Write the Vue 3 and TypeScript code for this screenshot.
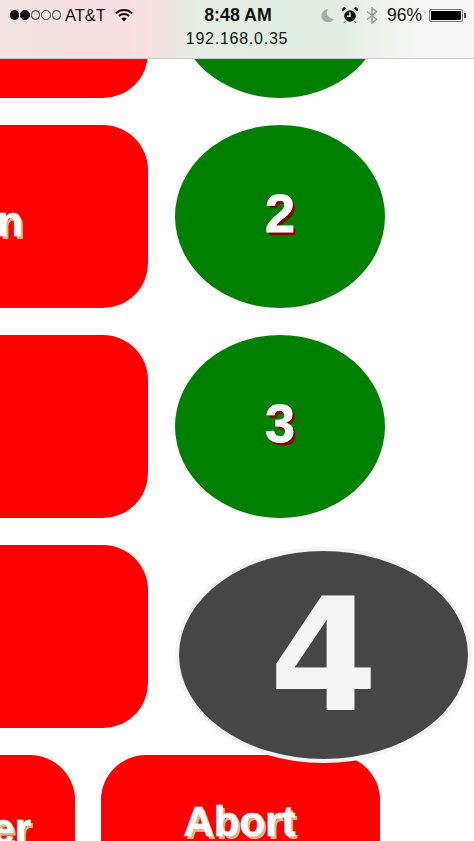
<script setup lang="ts">
const rows = [
  { id: 1, label: '', num: '' },
  { id: 2, label: 'n', num: '2' },
  { id: 3, label: '', num: '3' },
]
</script>

<template>
  <div class="screen">
    <header class="bar">
      <div class="status">
        <div class="left">
          <span class="dots">
            <i class="dot on"></i><i class="dot on"></i><i class="dot"></i><i class="dot"></i><i class="dot"></i>
          </span>
          <span class="carrier">AT&amp;T</span>
          <svg class="wifi" width="18" height="14" viewBox="0 0 18 14">
            <path d="M1 5.2C5.4 .9 12.6 .9 17 5.2" fill="none" stroke="#111" stroke-width="1.9" />
            <path d="M3.9 8C6.8 5.3 11.2 5.3 14.1 8" fill="none" stroke="#111" stroke-width="1.9" />
            <path d="M6.3 10.5L9 13.4 11.7 10.5C10 9.1 8 9.1 6.3 10.5Z" fill="#111" />
          </svg>
        </div>
        <div class="time">8:48 AM</div>
        <div class="right">
          <svg class="moon" width="15" height="15" viewBox="0 0 15 15">
            <path d="M8.6 1C5.6 3.6 5.800 9.500 14 11.200C11.500 15 5.500 15.200 2.600 11.600C-.4 7.600 2.800 1.200 8.600 1Z" fill="#a9aca9" />
          </svg>
          <svg class="alarm" width="16" height="16" viewBox="0 0 16 16">
            <circle cx="8" cy="9" r="5.800" fill="#111" />
            <path d="M8 5.200V9.300H4.800" fill="none" stroke="#e8efe8" stroke-width="1.400" />
            <path d="M.6 4.200L3.600 1.200 1.800 .6.400 2ZM15.400 4.200L12.400 1.200 14.200 .6 15.600 2ZM3 14.500L2 15.800M13 14.500L14 15.800" fill="#111" stroke="#111" stroke-width=".8" />
          </svg>
          <svg class="bt" width="12" height="17" viewBox="0 0 12 17">
            <path d="M1 4.500L10.500 12.200 6 16V1L10.500 4.800 1 12.500" fill="none" stroke="#9a9d9a" stroke-width="1.500" />
          </svg>
          <span class="pct">96%</span>
          <span class="battery"><i class="fill"></i></span><i class="nub"></i>
        </div>
      </div>
      <div class="url">192.168.0.35</div>
    </header>

    <main class="page">
      <section v-for="r in rows" :key="r.id" class="row">
        <button class="btn wide">
          <span class="label">{{ r.label }}</span>
        </button>
        <div class="circle">{{ r.num }}</div>
      </section>
      <section class="row">
        <button class="btn wide"></button>
        <div class="circle held">
          <div class="pressed">4</div>
        </div>
      </section>
      <section class="row last">
        <button class="btn first"><span class="label">er</span></button>
        <button class="btn abort">Abort</button>
      </section>
    </main>
  </div>
</template>

<style scoped>
.screen {
  position: relative;
  width: 474px;
  height: 841px;
  overflow: hidden;
  background: #fff;
  font-family: "Liberation Sans", Arial, sans-serif;
}
.bar {
  position: absolute;
  top: 0;
  left: 0;
  right: 0;
  height: 58px;
  z-index: 5;
  border-bottom: 1px solid #c9cbc9;
  background: linear-gradient(90deg, #f6e4e5 0, #f7dfe0 130px, #f3e2e1 160px, #e4eee3 195px, #e2eee2 340px, #eef3ed 385px, #f6f6f6 420px, #f6f6f6 100%);
  color: #111;
}
.status {
  display: grid;
  grid-template-columns: 1fr auto 1fr;
  align-items: center;
  height: 30px;
  padding: 0 8px 0 10px;
}
.left, .right {
  display: flex;
  align-items: center;
}
.right { justify-content: flex-end; }
.dots { display: flex; gap: 1px; width: 52px; }
.dot {
  width: 9.400px;
  height: 9.400px;
  box-sizing: border-box;
  border-radius: 50%;
  border: 1px solid #333;
}
.dot.on { background: #111; border-color: #111; }
.carrier { margin-left: 3px; font-size: 16.500px; }
.wifi { margin-left: 9px; }
.time { font-size: 17.800px; font-weight: 700; }
.moon { margin-right: 7px; }
.alarm { margin-right: 8px; }
.bt { margin-right: 9px; }
.pct { font-size: 17.500px; margin-right: 7px; }
.battery {
  display: block;
  box-sizing: border-box;
  width: 34px;
  height: 13px;
  border: 1px solid #777;
  border-radius: 2px;
  padding: 1px;
}
.fill { display: block; height: 100%; background: #000; border-radius: 1px; }
.nub { display: block; width: 2px; height: 5px; background: #555; margin-left: 1px; }
.url {
  text-align: center;
  font-size: 16px;
  letter-spacing: .76px;
  line-height: 18px;
}
.page {
  display: flex;
  flex-direction: column;
  gap: 27px;
  margin-top: -85px;
}
.row {
  display: flex;
  gap: 27px;
  height: 183px;
  flex: none;
}
.btn {
  display: flex;
  align-items: center;
  justify-content: center;
  flex: none;
  height: 183px;
  border: 0;
  padding: 0;
  border-radius: 45px;
  background: #f00;
  color: #fff;
  font: 700 42px "Liberation Sans", Arial, sans-serif;
  -webkit-text-stroke: .7px #fff;
  text-shadow: 2.500px 2.500px 0 #d9b98c;
}
.wide {
  width: 279px;
  margin-left: -131px;
  justify-content: flex-end;
  padding-right: 125px;
  box-sizing: border-box;
  padding-top: 10px;
}
.circle {
  position: relative;
  flex: none;
  width: 210px;
  height: 183px;
  border-radius: 50%;
  background: #008000;
  display: flex;
  align-items: center;
  justify-content: center;
  color: #fff;
  font-size: 54px;
  font-weight: 700;
  padding-bottom: 8px;
  box-sizing: border-box;
  -webkit-text-stroke: .8px #fff;
  text-shadow: 2.500px 2.500px 0 #8b0000;
}
.held { background: transparent; }
.pressed {
  position: absolute;
  z-index: 3;
  left: 0;
  top: 2px;
  width: 297px;
  height: 216px;
  box-sizing: border-box;
  border: 4px solid #f4f4f4;
  border-radius: 50%;
  background: #464646;
  color: #f5f5f5;
  font-family: "DejaVu Sans", sans-serif;
  font-size: 156px;
  line-height: 210px;
  text-align: center;
  -webkit-text-stroke: 0;
  text-shadow: none;
}
.last { gap: 26px; }
.first {
  width: 279px;
  margin-left: -204px;
  align-items: flex-start;
  justify-content: flex-end;
  padding: 50px 44px 0 0;
  box-sizing: border-box;
}
.abort {
  width: 279px;
  align-items: flex-start;
  padding: 43px 2px 0 0;
  box-sizing: border-box;
}
</style>
